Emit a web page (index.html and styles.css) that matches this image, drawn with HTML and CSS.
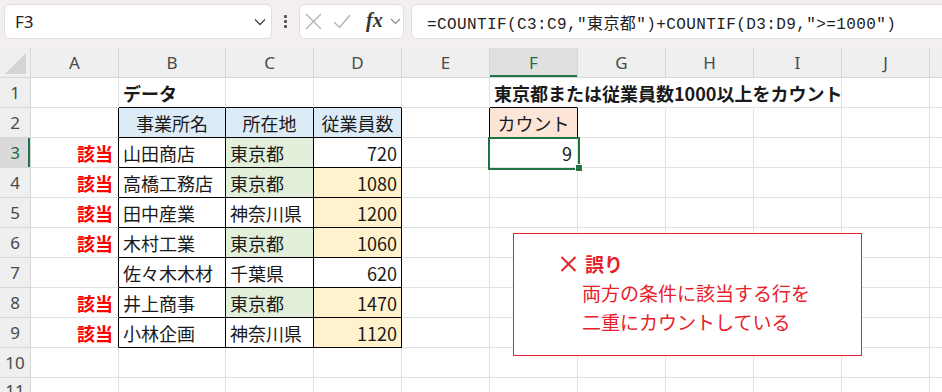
FILE: index.html
```html
<!DOCTYPE html>
<html lang="ja">
<head>
<meta charset="utf-8">
<title>COUNTIF</title>
<link rel="stylesheet" href="styles.css">
</head>
<body>
<div class="app">
  <div class="toolbar">
    <div class="namebox">
      <span>F3</span>
      <svg class="chev" width="12" height="8" viewBox="0 0 12 8"><path d="M1 1.5 L6 6.5 L11 1.5" fill="none" stroke="#444" stroke-width="1.3"/></svg>
    </div>
    <div class="dots"><i></i><i></i><i></i></div>
    <div class="fxbox">
      <svg class="ic-x" width="17" height="17" viewBox="0 0 17 17"><path d="M1 1 L16 16 M16 1 L1 16" fill="none" stroke="#b4b4b4" stroke-width="1.4"/></svg>
      <svg class="ic-ok" width="18" height="15" viewBox="0 0 18 15"><path d="M1 8 L6.5 13.5 L17 1" fill="none" stroke="#b4b4b4" stroke-width="1.4"/></svg>
      <span class="fx">fx</span>
      <svg class="chev2" width="11" height="7" viewBox="0 0 11 7"><path d="M1 1 L5.5 5.5 L10 1" fill="none" stroke="#888" stroke-width="1.2"/></svg>
    </div>
    <div class="formula">=COUNTIF(C3:C9,"東京都")+COUNTIF(D3:D9,"&gt;=1000")</div>
  </div>

  <div class="sheet">
    <div class="grid">
      <!-- header -->
      <div class="c h corner"><svg width="22" height="21" viewBox="0 0 22 21"><path d="M21 0 L21 21 L0 21 Z" fill="#d4d4d4"/></svg></div>
      <div class="c h">A</div>
      <div class="c h">B</div>
      <div class="c h">C</div>
      <div class="c h">D</div>
      <div class="c h">E</div>
      <div class="c h hsel">F</div>
      <div class="c h">G</div>
      <div class="c h">H</div>
      <div class="c h">I</div>
      <div class="c h">J</div>
      <div class="c h last"></div>

      <!-- row 1 -->
      <div class="c rh">1</div>
      <div class="c"></div>
      <div class="c b bB">データ</div>
      <div class="c bB"></div>
      <div class="c bB"></div>
      <div class="c"></div>
      <div class="c b bB nR title">東京都または従業員数1000以上をカウント</div>
      <div class="c nR"></div>
      <div class="c nR"></div>
      <div class="c"></div>
      <div class="c"></div>
      <div class="c last"></div>

      <!-- row 2 -->
      <div class="c rh">2</div>
      <div class="c bR"></div>
      <div class="c bR bB ctr blue">事業所名</div>
      <div class="c bR bB ctr blue">所在地</div>
      <div class="c bR bB ctr blue">従業員数</div>
      <div class="c bR"></div>
      <div class="c bR bB ctr peach">カウント</div>
      <div class="c"></div>
      <div class="c"></div>
      <div class="c"></div>
      <div class="c"></div>
      <div class="c last"></div>

      <!-- row 3 -->
      <div class="c rh rsel">3</div>
      <div class="c bR r red">該当</div>
      <div class="c bR bB">山田商店</div>
      <div class="c bR bB green">東京都</div>
      <div class="c bR bB r">720</div>
      <div class="c"></div>
      <div class="c r sel">9<span class="selbox"></span><span class="handle"></span></div>
      <div class="c"></div>
      <div class="c"></div>
      <div class="c"></div>
      <div class="c"></div>
      <div class="c last"></div>

      <!-- row 4 -->
      <div class="c rh">4</div>
      <div class="c bR r red">該当</div>
      <div class="c bR bB">高橋工務店</div>
      <div class="c bR bB green">東京都</div>
      <div class="c bR bB r yellow">1080</div>
      <div class="c"></div>
      <div class="c"></div>
      <div class="c"></div>
      <div class="c"></div>
      <div class="c"></div>
      <div class="c"></div>
      <div class="c last"></div>

      <!-- row 5 -->
      <div class="c rh">5</div>
      <div class="c bR r red">該当</div>
      <div class="c bR bB">田中産業</div>
      <div class="c bR bB">神奈川県</div>
      <div class="c bR bB r yellow">1200</div>
      <div class="c"></div>
      <div class="c"></div>
      <div class="c"></div>
      <div class="c"></div>
      <div class="c"></div>
      <div class="c"></div>
      <div class="c last"></div>

      <!-- row 6 -->
      <div class="c rh">6</div>
      <div class="c bR r red">該当</div>
      <div class="c bR bB">木村工業</div>
      <div class="c bR bB green">東京都</div>
      <div class="c bR bB r yellow">1060</div>
      <div class="c"></div>
      <div class="c"></div>
      <div class="c"></div>
      <div class="c"></div>
      <div class="c"></div>
      <div class="c"></div>
      <div class="c last"></div>

      <!-- row 7 -->
      <div class="c rh">7</div>
      <div class="c bR"></div>
      <div class="c bR bB">佐々木木材</div>
      <div class="c bR bB">千葉県</div>
      <div class="c bR bB r">620</div>
      <div class="c"></div>
      <div class="c"></div>
      <div class="c"></div>
      <div class="c"></div>
      <div class="c"></div>
      <div class="c"></div>
      <div class="c last"></div>

      <!-- row 8 -->
      <div class="c rh">8</div>
      <div class="c bR r red">該当</div>
      <div class="c bR bB">井上商事</div>
      <div class="c bR bB green">東京都</div>
      <div class="c bR bB r yellow">1470</div>
      <div class="c"></div>
      <div class="c"></div>
      <div class="c"></div>
      <div class="c"></div>
      <div class="c"></div>
      <div class="c"></div>
      <div class="c last"></div>

      <!-- row 9 -->
      <div class="c rh">9</div>
      <div class="c bR r red">該当</div>
      <div class="c bR bB">小林企画</div>
      <div class="c bR bB">神奈川県</div>
      <div class="c bR bB r yellow">1120</div>
      <div class="c"></div>
      <div class="c"></div>
      <div class="c"></div>
      <div class="c"></div>
      <div class="c"></div>
      <div class="c"></div>
      <div class="c last"></div>

      <!-- row 10 -->
      <div class="c rh">10</div>
      <div class="c"></div>
      <div class="c"></div>
      <div class="c"></div>
      <div class="c"></div>
      <div class="c"></div>
      <div class="c"></div>
      <div class="c"></div>
      <div class="c"></div>
      <div class="c"></div>
      <div class="c"></div>
      <div class="c last"></div>

      <!-- row 11 -->
      <div class="c rh rlast">11</div>
      <div class="c"></div>
      <div class="c"></div>
      <div class="c"></div>
      <div class="c"></div>
      <div class="c"></div>
      <div class="c"></div>
      <div class="c"></div>
      <div class="c"></div>
      <div class="c"></div>
      <div class="c"></div>
      <div class="c last"></div>
    </div>

    <div class="callout">
      <div class="ct">
        <svg width="17" height="16" viewBox="0 0 17 16"><path d="M1.5 1 L15.5 15 M15.5 1 L1.5 15" fill="none" stroke="#e8202a" stroke-width="2"/></svg>
        <span>誤り</span>
      </div>
      <p>両方の条件に該当する行を</p>
      <p>二重にカウントしている</p>
    </div>
  </div>
</div>
</body>
</html>
```

FILE: styles.css
```css
* { box-sizing: border-box; margin: 0; padding: 0; }
html, body { width: 942px; height: 392px; overflow: hidden; background: #fff; }
body { font-family: "Noto Sans CJK JP", "Noto Sans", sans-serif; color: #1a1a1a; }

.app { width: 942px; height: 392px; overflow: hidden; }

/* ---------- formula bar ---------- */
.toolbar {
  height: 48px;
  background: #f4efef;
  display: flex;
  align-items: flex-start;
  padding: 4px 0 0 4px;
  overflow: hidden;
  white-space: nowrap;
}
.namebox {
  flex: none;
  width: 268px;
  height: 35px;
  background: #fff;
  border: 1px solid #e3dddd;
  border-radius: 6px;
  display: flex;
  align-items: center;
  justify-content: space-between;
  padding: 0 5px 0 10px;
  font-family: "Noto Sans", sans-serif;
  font-size: 17px;
  color: #222;
}
.dots {
  flex: none;
  width: 27px;
  height: 35px;
  display: flex;
  flex-direction: column;
  align-items: center;
  justify-content: center;
  gap: 2px;
}
.dots i { display: block; width: 3px; height: 3px; background: #555; border-radius: 1px; }
.fxbox {
  flex: none;
  width: 105px;
  height: 35px;
  background: #fff;
  border: 1px solid #e3dddd;
  border-radius: 6px;
  display: flex;
  align-items: center;
  padding-left: 5px;
}
.ic-ok { margin-left: 11px; }
.fx {
  margin-left: 15px;
  font-family: "Liberation Serif", serif;
  font-style: italic;
  font-weight: 700;
  font-size: 20px;
  color: #333;
  width: 20px;
  line-height: 1;
  padding-bottom: 3px;
}
.chev2 { margin-left: 4px; }
.formula {
  flex: none;
  margin-left: 7px;
  width: 560px;
  height: 35px;
  background: #fff;
  border: 1px solid #e3dddd;
  border-radius: 6px;
  padding-left: 15px;
  display: flex;
  align-items: center;
  font-family: "Liberation Mono", "Noto Sans CJK JP", monospace;
  font-size: 16px;
  letter-spacing: 0.4px;
  color: #222;
}

/* ---------- sheet ---------- */
.sheet { position: relative; }
.grid {
  display: grid;
  grid-template-columns: 31px 88px 107px 88px 88px 88px 88px 88px 88px 88px 88px 1fr;
  grid-auto-rows: 30px;
}
.c {
  border-right: 1px solid #e1e1e1;
  border-bottom: 1px solid #e1e1e1;
  display: flex;
  align-items: center;
  padding: 0 4px;
  font-size: 18px;
  line-height: 1;
  white-space: nowrap;
  min-width: 0;
}
.last { border-right: none; }
.h, .rh {
  background: #efefef;
  border-color: #d6d6d6;
  justify-content: center;
  padding: 0;
  color: #4a4a4a;
  font-family: "Noto Sans", sans-serif;
  font-size: 17px;
}
.rlast { align-items: flex-start; padding-top: 4px; }
.corner { align-items: flex-end; justify-content: flex-end; padding: 0 3px 3px 0; }
.hsel { background: #e0e0e0; color: #1d6b40; box-shadow: inset 0 -2px 0 #217346; }
.rsel { background: #dadada; color: #1d6b40; box-shadow: inset -2px 0 0 #217346; }

.b { font-weight: 700; }
.r { justify-content: flex-end; }
.ctr { justify-content: center; }
.red { color: #ff0000; font-weight: 700; padding-right: 5px; }
.bR { border-right-color: #000; }
.bB { border-bottom-color: #000; }
.nR { border-right-color: transparent; }
.title { position: relative; z-index: 1; overflow: visible; }

.blue { background: #ddebf7; }
.green { background: #e2efda; }
.yellow { background: #fff2cc; }
.peach { background: #fce4d6; }

.sel { position: relative; z-index: 2; padding-right: 5px; }
.selbox {
  position: absolute;
  left: -2px; top: -1px; right: -3px; bottom: -3px;
  border: 2px solid #217346;
}
.handle {
  position: absolute;
  right: -5px; bottom: -4px;
  width: 6px; height: 6px;
  background: #217346;
  outline: 1px solid #fff;
}

/* ---------- callout ---------- */
.callout {
  position: absolute;
  left: 513px;
  top: 185px;
  width: 349px;
  height: 123px;
  border: 1px solid #e8202a;
  background: #fff;
  color: #e8202a;
  font-size: 19px;
  line-height: 29px;
  padding: 15px 0 0 46px;
  z-index: 3;
}
.ct { display: flex; align-items: center; gap: 8px; font-weight: 700; }
.callout p { padding-left: 22px; }
```
